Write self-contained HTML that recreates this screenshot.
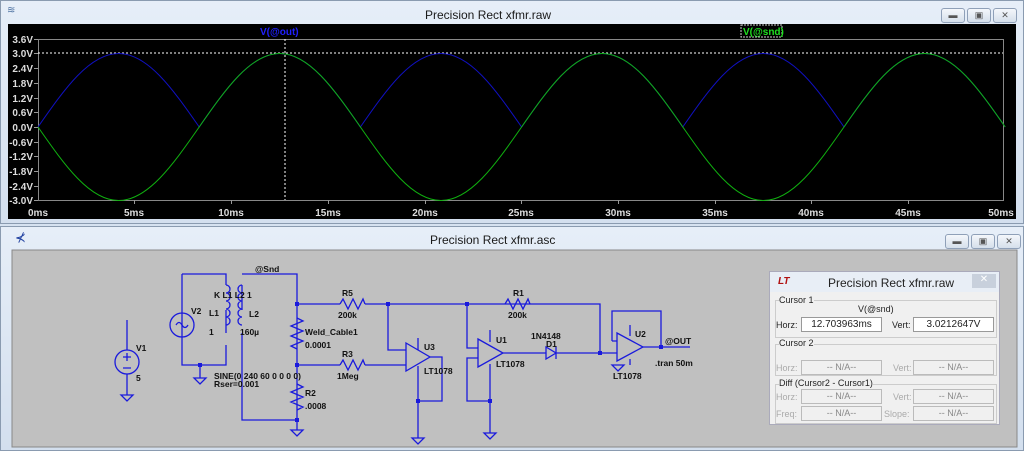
<!DOCTYPE html>
<html><head><meta charset="utf-8"><style>
body{margin:0;width:1024px;height:451px;overflow:hidden;background:#d6e2f0;font-family:"Liberation Sans",sans-serif;position:relative}
.win{position:absolute;left:0;width:1024px;background:linear-gradient(#e6eef8,#d3dfee);border:1px solid #8a9bb0;box-sizing:border-box}
.t{position:absolute;font-size:12px;color:#1a1a1a}
.btn{position:absolute;top:8px;width:24px;height:15px;border:1px solid #8fa0b8;border-radius:3px;background:linear-gradient(#f4f7fb,#d5dfeb);box-sizing:border-box;font-size:9px;text-align:center;line-height:13px;color:#555}
svg text{font-family:"Liberation Sans",sans-serif}
.d div{position:absolute}
.bx{box-sizing:border-box;height:15px;text-align:center;line-height:13px}
</style></head><body>
<div class="win" style="top:0;height:224px"></div>
<div class="t" style="left:425px;top:8px;font-size:12px">Precision Rect xfmr.raw</div>
<div class="t" style="left:7px;top:5px;color:#4a6fa0;font-size:10px">≋</div>
<div class="btn" style="left:941px;top:8px">▬</div><div class="btn" style="left:967px">▣</div><div class="btn" style="left:993px">✕</div>
<svg style="position:absolute;left:0;top:0" width="1024" height="224">
<rect x="8" y="24" width="1008" height="195" fill="#000"/>
<rect x="38.5" y="39.5" width="965" height="161" fill="none" stroke="#888"/>
<g fill="#ddd" font-size="10" font-weight="bold" text-anchor="end">
<text x="33" y="43">3.6V</text><text x="33" y="57">3.0V</text><text x="33" y="72">2.4V</text><text x="33" y="87">1.8V</text><text x="33" y="102">1.2V</text><text x="33" y="116">0.6V</text><text x="33" y="131">0.0V</text><text x="33" y="146">-0.6V</text><text x="33" y="160">-1.2V</text><text x="33" y="175">-1.8V</text><text x="33" y="190">-2.4V</text><text x="33" y="204">-3.0V</text>
</g>
<g fill="#ddd" font-size="10" font-weight="bold" text-anchor="middle">
<text x="38" y="216">0ms</text><text x="134" y="216">5ms</text><text x="231" y="216">10ms</text><text x="328" y="216">15ms</text><text x="425" y="216">20ms</text><text x="521" y="216">25ms</text><text x="618" y="216">30ms</text><text x="715" y="216">35ms</text><text x="811" y="216">40ms</text><text x="908" y="216">45ms</text><text x="1001" y="216">50ms</text>
</g>
<g stroke="#999"><path d="M34,39.5h4M34,53.5h4M34,68.5h4M34,83.5h4M34,98.5h4M34,112.5h4M34,127.5h4M34,142.5h4M34,156.5h4M34,171.5h4M34,186.5h4M34,200.5h4M134.5,200v4M231.5,200v4M328.5,200v4M425.5,200v4M521.5,200v4M618.5,200v4M715.5,200v4M811.5,200v4M908.5,200v4"/></g>
<line x1="38" y1="53" x2="1003" y2="53" stroke="#fff" stroke-dasharray="2,2"/>
<line x1="285" y1="39" x2="285" y2="200" stroke="#fff" stroke-dasharray="2,2"/>
<path fill="none" stroke="#1010c0" d="M38,127 c26.9,-38.6 51.6,-73.5 80.6,-73.5 c29,0 53.7,34.9 80.6,73.5 c26.9,-38.6 51.6,-73.5 80.6,-73.5 c29,0 53.7,34.9 80.6,73.5 c26.9,-38.6 51.6,-73.5 80.6,-73.5 c29,0 53.7,34.9 80.6,73.5 c26.9,-38.6 51.6,-73.5 80.6,-73.5 c29,0 53.7,34.9 80.6,73.5 c26.9,-38.6 51.6,-73.5 80.6,-73.5 c29,0 53.7,34.9 80.6,73.5 c26.9,-38.6 51.6,-73.5 80.6,-73.5 c29,0 53.7,34.9 80.6,73.5"/>
<path fill="none" stroke="#10b010" d="M38,127 c26.9,38.6 51.6,73.5 80.6,73.5 c29,0 53.7,-34.9 80.6,-73.5 c26.9,-38.6 51.6,-73.5 80.6,-73.5 c29,0 53.7,34.9 80.6,73.5 c26.9,38.6 51.6,73.5 80.6,73.5 c29,0 53.7,-34.9 80.6,-73.5 c26.9,-38.6 51.6,-73.5 80.6,-73.5 c29,0 53.7,34.9 80.6,73.5 c26.9,38.6 51.6,73.5 80.6,73.5 c29,0 53.7,-34.9 80.6,-73.5 c26.9,-38.6 51.6,-73.5 80.6,-73.5 c29,0 53.7,34.9 80.6,73.5"/>
<text x="260" y="35" fill="#2020ff" font-size="10" font-weight="bold">V(@out)</text>
<rect x="741" y="25" width="41" height="12" fill="none" stroke="#ccc" stroke-dasharray="2,1"/>
<text x="743" y="35" fill="#20e020" font-size="10" font-weight="bold">V(@snd)</text>
</svg>
<div class="win" style="top:226px;height:225px"></div>
<div class="t" style="left:430px;top:233px">Precision Rect xfmr.asc</div>
<div class="t" style="left:15px;top:230px;color:#2040a0;font-size:13px">⊀</div>
<div class="btn" style="left:945px;top:234px">▬</div><div class="btn" style="left:971px;top:234px">▣</div><div class="btn" style="left:997px;top:234px">✕</div>
<svg style="position:absolute;left:0;top:0" width="1024" height="451">
<rect x="12" y="250" width="1005" height="197" fill="#c0c0c0" stroke="#888"/>
<g fill="none" stroke="#1a1adc" stroke-width="1.3">
<path d="M182,274H226V285M226,310V333M226,345V365H182V274M200,365V378"/>
<path d="M242,333V345M242,310V285M242,274H297V420H242V345M297,304H340M365,304H600V353M297,420V430M297,365H340M365,365H406M388,304V350H406"/>
<path d="M226,285a4,4 0 0 1 0,8a4,4 0 0 1 0,8a4,4 0 0 1 0,8a4,4 0 0 1 0,8a4,4 0 0 1 0,8 M242,285a4,4 0 0 0 0,8a4,4 0 0 0 0,8a4,4 0 0 0 0,8a4,4 0 0 0 0,8a4,4 0 0 0 0,8"/>
<path d="M297,318l6,3l-12,5l12,5l-12,5l12,5l-12,5l6,3M297,384l6,3l-12,5l12,5l-12,5l12,5l-6,3M340,304l3,-5l5,10l5,-10l5,10l5,-10l2,5M340,365l3,-5l5,10l5,-10l5,10l5,-10l2,5M505,304l3,-5l5,10l5,-10l5,10l5,-10l2,5"/>
<circle cx="182" cy="325" r="12"/><circle cx="127" cy="362" r="12"/>
<path d="M176,325q3,-5 6,0t6,0M127,320V350M127,374V395M123,357h8M127,353v8M123,368h8"/>
<path d="M121,395h12l-6,6z M194,378h12l-6,6z M291,430h12l-6,6z M412,438h12l-6,6z M484,433h12l-6,6z M612,365h12l-6,6z"/>
<path d="M406,343L430,357L406,371Z M478,339L503,353L478,367Z M617,333L643,347L617,361Z"/>
<path d="M430,357H442V401H418V366M418,401V438M418,350V338M467,304V348H478M478,358H467V401H490V364M490,401V433M490,342V330M503,353H546M556,353H617M546,347V359L556,353ZM556,347V359M612,341H617M612,341V311H661V347M643,347H690M630,359V365M630,336V325"/>
</g>
<g fill="#1a1adc"><rect x="295" y="302" width="4" height="4"/><rect x="295" y="363" width="4" height="4"/><rect x="295" y="418" width="4" height="4"/><rect x="198" y="363" width="4" height="4"/><rect x="386" y="302" width="4" height="4"/><rect x="465" y="302" width="4" height="4"/><rect x="598" y="351" width="4" height="4"/><rect x="416" y="399" width="4" height="4"/><rect x="488" y="399" width="4" height="4"/><rect x="659" y="345" width="4" height="4"/></g>
<g font-size="8.5" font-weight="bold" fill="#111">
<text x="255" y="272">@Snd</text><text x="214" y="298">K L1 L2 1</text><text x="191" y="314">V2</text><text x="209" y="316">L1</text><text x="249" y="317">L2</text><text x="209" y="335">1</text><text x="240" y="335">160µ</text>
<text x="136" y="351">V1</text><text x="136" y="381">5</text><text x="214" y="379">SINE(0 240 60 0 0 0 0)</text><text x="214" y="387">Rser=0.001</text>
<text x="305" y="335">Weld_Cable1</text><text x="305" y="348">0.0001</text><text x="305" y="396">R2</text><text x="305" y="409">.0008</text>
<text x="342" y="296">R5</text><text x="338" y="318">200k</text><text x="342" y="357">R3</text><text x="337" y="379">1Meg</text>
<text x="513" y="296">R1</text><text x="508" y="318">200k</text><text x="531" y="339">1N4148</text><text x="546" y="347">D1</text>
<text x="424" y="350">U3</text><text x="424" y="374">LT1078</text><text x="496" y="343">U1</text><text x="496" y="367">LT1078</text><text x="635" y="337">U2</text><text x="613" y="379">LT1078</text>
<text x="665" y="344">@OUT</text><text x="655" y="366">.tran 50m</text></g>
</svg>
<div class="d" style="position:absolute;left:769px;top:271px;width:231px;height:154px;background:#f0f0f0;border:1px solid #aab;box-sizing:border-box;font-size:9px;color:#222">
<div style="left:0;top:0;width:229px;height:20px;background:#e8eef6"></div>
<div style="left:8px;top:4px;color:#b01010;font-weight:bold;font-style:italic;font-size:10px">LT</div>
<div style="left:58px;top:4px;font-size:12px">Precision Rect xfmr.raw</div>
<div style="left:202px;top:2px;width:24px;height:14px;background:#c8d0dc;color:#fff;text-align:center;font-size:10px">✕</div>
<div style="left:5px;top:28px;width:220px;height:36px;border:1px solid #ccc"></div>
<div style="left:9px;top:23px;background:#f0f0f0">Cursor 1</div>
<div style="left:88px;top:32px">V(@snd)</div>
<div style="left:6px;top:48px">Horz:</div><div class="bx" style="left:31px;top:45px;width:81px;background:#fff;border:1px solid #999;font-size:10px">12.703963ms</div>
<div style="left:122px;top:48px">Vert:</div><div class="bx" style="left:143px;top:45px;width:81px;background:#fff;border:1px solid #999;font-size:10px">3.0212647V</div>
<div style="left:5px;top:72px;width:220px;height:30px;border:1px solid #ccc"></div>
<div style="left:9px;top:66px;background:#f0f0f0">Cursor 2</div>
<div style="left:6px;top:91px;color:#aaa">Horz:</div><div class="bx" style="left:31px;top:88px;width:81px;border:1px solid #bbb;color:#888">-- N/A--</div>
<div style="left:123px;top:91px;color:#aaa">Vert:</div><div class="bx" style="left:143px;top:88px;width:81px;border:1px solid #bbb;color:#888">-- N/A--</div>
<div style="left:5px;top:112px;width:220px;height:38px;border:1px solid #ccc"></div>
<div style="left:9px;top:106px;background:#f0f0f0">Diff (Cursor2 - Cursor1)</div>
<div style="left:6px;top:120px;color:#aaa">Horz:</div><div class="bx" style="left:31px;top:117px;width:81px;border:1px solid #bbb;color:#888">-- N/A--</div>
<div style="left:123px;top:120px;color:#aaa">Vert:</div><div class="bx" style="left:143px;top:117px;width:81px;border:1px solid #bbb;color:#888">-- N/A--</div>
<div style="left:6px;top:137px;color:#aaa">Freq:</div><div class="bx" style="left:31px;top:134px;width:81px;border:1px solid #bbb;color:#888">-- N/A--</div>
<div style="left:114px;top:137px;color:#aaa">Slope:</div><div class="bx" style="left:143px;top:134px;width:81px;border:1px solid #bbb;color:#888">-- N/A--</div>
</div>
</body></html>
